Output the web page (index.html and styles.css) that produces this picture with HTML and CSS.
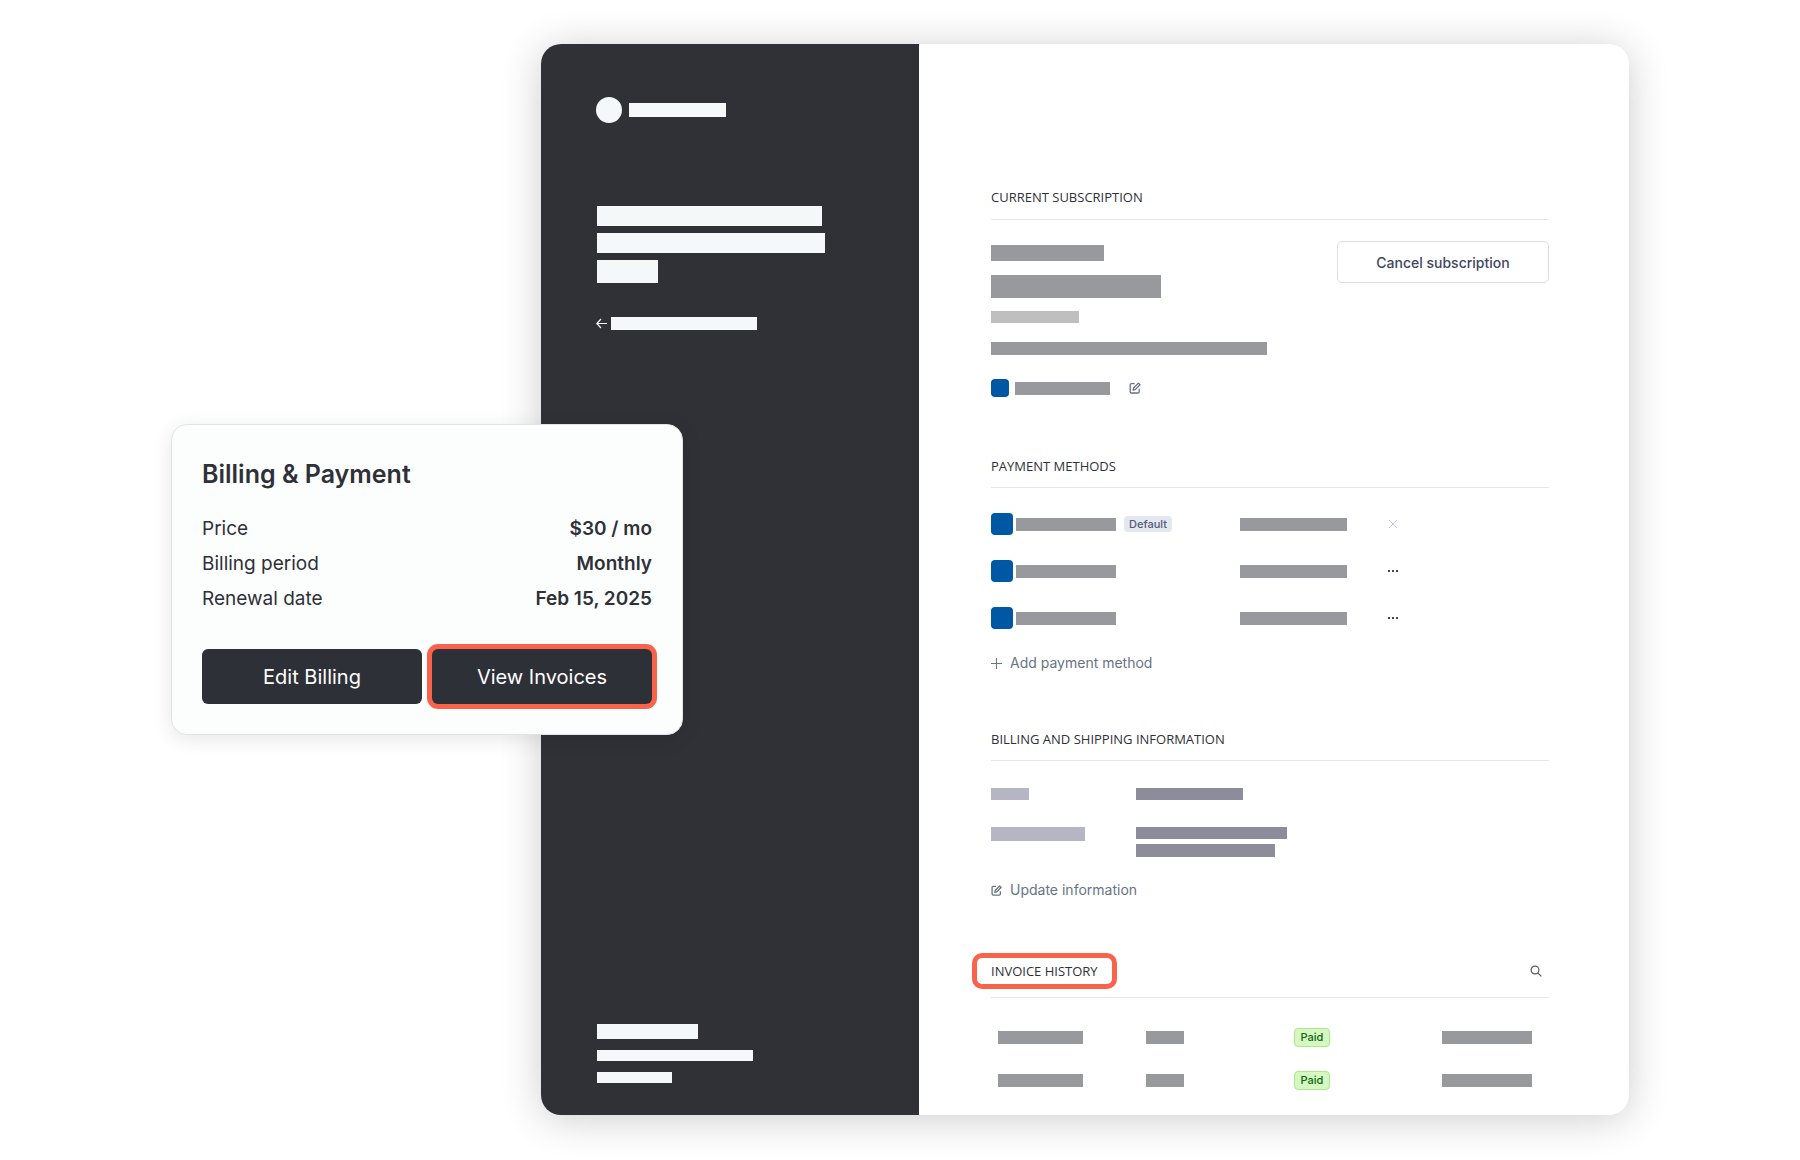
FILE: index.html
```
<!DOCTYPE html>
<html lang="en">
<head>
    <meta charset="UTF-8">
    <meta name="viewport" content="width=device-width, initial-scale=1.0">
    <title>Billing &amp; Payment</title>
    <link rel="stylesheet" href="styles.css">
</head>
<body>
    <div class="stage">
        <div class="window">
            <aside class="sidebar">
                <div class="brand">
                    <span class="logo"></span>
                    <span class="bar brand-name"></span>
                </div>
                <div class="intro">
                    <span class="bar intro-1"></span>
                    <span class="bar intro-2"></span>
                    <span class="bar intro-3"></span>
                </div>
                <a href="#" class="back" aria-label="Back">
                    <svg width="12" height="11" viewBox="0 0 12 11" fill="none" stroke="currentColor" stroke-width="1.2"><path d="M11 5.5H1M5 1L0.8 5.5L5 10"/></svg>
                    <span class="bar back-text"></span>
                </a>
                <div class="sidebar-footer">
                    <span class="bar footer-1"></span>
                    <span class="bar footer-2"></span>
                    <span class="bar footer-3"></span>
                </div>
            </aside>

            <main class="content">
                <section class="subscription">
                    <h2>CURRENT SUBSCRIPTION</h2>
                    <div class="plan">
                        <div class="plan-info">
                            <span class="bar plan-name"></span>
                            <span class="bar plan-price"></span>
                            <span class="bar plan-note"></span>
                            <span class="bar plan-renewal"></span>
                            <div class="plan-card">
                                <span class="tile tile-small"></span>
                                <span class="bar plan-card-number"></span>
                                <button class="icon-btn" aria-label="Edit">
                                    <svg width="12" height="12" viewBox="0 0 12 12" fill="none" stroke="currentColor" stroke-width="1.3" stroke-linejoin="round"><path d="M5.5 1.6H2.4Q1.2 1.6 1.2 2.8V9.8Q1.2 11 2.4 11H9Q10.2 11 10.2 9.8V6.8"/><path d="M9.4 1.1L11 2.7L6.2 7.6L4.2 8L4.6 6Z"/></svg>
                                </button>
                            </div>
                        </div>
                        <button class="cancel-btn">Cancel subscription</button>
                    </div>
                </section>

                <section class="methods">
                    <h2>PAYMENT METHODS</h2>
                    <ul class="method-list">
                        <li>
                            <div class="method">
                                <span class="tile"></span>
                                <span class="bar method-number"></span>
                                <span class="default-badge">Default</span>
                            </div>
                            <span class="bar method-expiry"></span>
                            <button class="icon-btn remove" aria-label="Remove">
                                <svg width="10" height="10" viewBox="0 0 10 10" fill="none" stroke="currentColor"><path d="M1 1L9 9M9 1L1 9"/></svg>
                            </button>
                        </li>
                        <li>
                            <div class="method">
                                <span class="tile"></span>
                                <span class="bar method-number"></span>
                            </div>
                            <span class="bar method-expiry"></span>
                            <button class="icon-btn more" aria-label="More">
                                <svg width="10" height="2" viewBox="0 0 10 2" fill="currentColor"><path d="M0 0h2v2H0zM4 0h2v2H4zM8 0h2v2H8z"/></svg>
                            </button>
                        </li>
                        <li>
                            <div class="method">
                                <span class="tile"></span>
                                <span class="bar method-number"></span>
                            </div>
                            <span class="bar method-expiry"></span>
                            <button class="icon-btn more" aria-label="More">
                                <svg width="10" height="2" viewBox="0 0 10 2" fill="currentColor"><path d="M0 0h2v2H0zM4 0h2v2H4zM8 0h2v2H8z"/></svg>
                            </button>
                        </li>
                    </ul>
                    <a href="#" class="action">
                        <svg width="11" height="11" viewBox="0 0 11 11" fill="none" stroke="currentColor"><path d="M5.5 0V11M0 5.5H11"/></svg>
                        Add payment method
                    </a>
                </section>

                <section class="billing">
                    <h2>BILLING AND SHIPPING INFORMATION</h2>
                    <dl class="billing-info">
                        <dt><span class="bar label-name"></span></dt>
                        <dd><span class="bar value-name"></span></dd>
                        <dt><span class="bar label-address"></span></dt>
                        <dd>
                            <span class="bar value-street"></span>
                            <span class="bar value-city"></span>
                        </dd>
                    </dl>
                    <a href="#" class="action">
                        <svg width="11" height="11" viewBox="0 0 12 12" fill="none" stroke="currentColor" stroke-width="1.4" stroke-linejoin="round"><path d="M5.5 1.6H2.4Q1.2 1.6 1.2 2.8V9.8Q1.2 11 2.4 11H9Q10.2 11 10.2 9.8V6.8"/><path d="M9.4 1.1L11 2.7L6.2 7.6L4.2 8L4.6 6Z"/></svg>
                        Update information
                    </a>
                </section>

                <section class="invoices">
                    <div class="invoices-head">
                        <h2 class="highlight">INVOICE HISTORY</h2>
                        <button class="icon-btn search" aria-label="Search">
                            <svg width="12" height="12" viewBox="0 0 12 12" fill="none" stroke="currentColor" stroke-width="1.2"><circle cx="5" cy="5" r="3.9"/><path d="M7.8 7.8L11.3 11.3"/></svg>
                        </button>
                    </div>
                    <table class="invoice-table">
                        <tr>
                            <td><span class="bar invoice-date"></span></td>
                            <td><span class="bar invoice-amount"></span></td>
                            <td><span class="paid-badge">Paid</span></td>
                            <td><span class="bar invoice-plan"></span></td>
                        </tr>
                        <tr>
                            <td><span class="bar invoice-date"></span></td>
                            <td><span class="bar invoice-amount"></span></td>
                            <td><span class="paid-badge">Paid</span></td>
                            <td><span class="bar invoice-plan"></span></td>
                        </tr>
                    </table>
                </section>
            </main>
        </div>

        <!-- Card on top of the window -->
        <div class="billing-card">
            <h1>Billing &amp; Payment</h1>
            <dl class="summary">
                <div><dt>Price</dt><dd>$30 / mo</dd></div>
                <div><dt>Billing period</dt><dd>Monthly</dd></div>
                <div><dt>Renewal date</dt><dd>Feb 15, 2025</dd></div>
            </dl>
            <div class="card-buttons">
                <button class="card-btn">Edit Billing</button>
                <button class="card-btn active">View Invoices</button>
            </div>
        </div>
    </div>
</body>
</html>
```

FILE: styles.css
```
* {
    box-sizing: border-box;
}

body {
    margin: 0;
    font-family: Inter, "Liberation Sans", sans-serif;
    font-size: 14px;
    line-height: 20px;
    color: #2f3038;
    background-color: #ffffff;
}

h1, h2, ul, dl, dd {
    margin: 0;
    padding: 0;
}

button {
    font-family: inherit;
    cursor: pointer;
}

svg {
    display: block;
}

.stage {
    position: relative;
    margin: 0 auto;
    padding: 44px 0;
    width: 81%;
}

/* Window */
.window {
    display: grid;
    grid-template-columns: 378px 1fr;
    margin-left: 370px;
    border-radius: 20px;
    background-color: #ffffff;
    box-shadow: 0 4px 40px rgba(0, 0, 0, 0.2);
}

.bar {
    display: block;
    height: 13px;
    background-color: #98999d;
}

/* Sidebar */
.sidebar {
    display: flex;
    flex-direction: column;
    padding: 53px 55px 32px;
    border-radius: 20px 0 0 20px;
    background-color: #303136;
    color: #f4f8f9;
}

.sidebar .bar {
    background-color: #f4f8f9;
}

.brand {
    display: flex;
    align-items: center;
    gap: 7px;
}

.logo {
    width: 26px;
    height: 26px;
    border-radius: 50%;
    background-color: #f4f8f9;
}

.sidebar .brand-name {
    width: 97px;
    height: 14px;
}

.intro {
    display: flex;
    flex-direction: column;
    gap: 7px;
    margin: 83px 0 34px;
    padding-left: 1px;
}

.intro .bar {
    height: 20px;
}

.intro-1 { width: 225px; }
.intro-2 { width: 228px; }
.intro-3 { width: 61px; }

.intro .intro-3 {
    height: 23px;
}

.back {
    display: flex;
    align-items: center;
    gap: 3px;
    color: inherit;
}

.back-text {
    width: 146px;
}

.sidebar-footer {
    display: flex;
    flex-direction: column;
    gap: 11px;
    margin-top: auto;
    padding-left: 1px;
}

.sidebar-footer .bar {
    height: 11px;
}

.sidebar-footer .footer-1 {
    height: 15px;
}

.footer-1 { width: 101px; }
.footer-2 { width: 156px; }
.footer-3 { width: 75px; }

/* Content */
.content {
    padding: 143px 80px 13px 72px;
}

h2 {
    padding-bottom: 11px;
    border-bottom: 1px solid #e4e6ec;
    font-family: "Open Sans", "Liberation Sans", sans-serif;
    font-size: 13px;
    font-weight: 400;
    line-height: 20px;
}

.tile {
    width: 22px;
    height: 22px;
    border-radius: 4px;
    background-color: #0057a3;
}

.tile-small {
    width: 18px;
    height: 18px;
}

.icon-btn {
    padding: 0;
    border: none;
    background: none;
    color: #6a6e88;
}

.action {
    display: flex;
    align-items: center;
    gap: 8px;
    color: #687385;
    text-decoration: none;
}

.subscription h2 {
    padding-bottom: 12px;
}

.plan {
    display: flex;
    justify-content: space-between;
    align-items: flex-start;
    margin-top: 21px;
}

.plan-info {
    padding-top: 4px;
}

.plan-name {
    width: 113px;
    height: 16px;
}

.plan-price {
    width: 170px;
    height: 23px;
    margin-top: 14px;
}

.plan-note {
    width: 88px;
    height: 12px;
    margin-top: 13px;
    background-color: #bfbfbf;
}

.plan-renewal {
    width: 276px;
    margin-top: 19px;
}

.plan-card {
    display: flex;
    align-items: center;
    gap: 6px;
    margin-top: 24px;
}

.plan-card-number {
    width: 95px;
    margin-right: 13px;
}

.cancel-btn {
    width: 212px;
    height: 42px;
    border: 1px solid #dcdde2;
    border-radius: 5px;
    background-color: #ffffff;
    color: #414560;
    font-size: 14px;
    font-weight: 500;
}

.methods {
    margin-top: 59px;
}

.method-list {
    display: grid;
    gap: 25px;
    margin: 25px 0 24px;
    list-style: none;
}

.method-list li {
    display: grid;
    grid-template-columns: 249px 148px auto;
    justify-content: start;
    align-items: center;
}

.method {
    display: flex;
    align-items: center;
}

.method-number {
    width: 100px;
    margin: 0 8px 0 3px;
}

.method-expiry {
    width: 107px;
}

.default-badge {
    padding: 0 5px;
    border-radius: 4px;
    background-color: #e3e8f0;
    color: #545978;
    font-size: 11px;
    font-weight: 500;
    line-height: 16px;
}

.remove {
    color: #c0c8d2;
}

.more {
    color: #414560;
}

.billing {
    margin-top: 56px;
}

.billing-info {
    display: grid;
    grid-template-columns: 145px 1fr;
    row-gap: 27px;
    margin: 27px 0 23px;
}

.billing-info .bar {
    height: 12px;
}

.billing-info dt .bar {
    background-color: #b4b7c3;
}

.billing-info dd .bar {
    background-color: #8c8c9a;
}

.label-name { width: 38px; }
.label-address { width: 94px; }
.value-name { width: 107px; }
.value-street { width: 151px; }
.value-city { width: 139px; }

.billing-info .label-address {
    height: 14px;
}

.billing-info .value-city {
    height: 13px;
    margin-top: 5px;
}

.invoices {
    margin-top: 57px;
}

.invoices-head {
    display: flex;
    justify-content: space-between;
    align-items: center;
    padding: 1px 7px 13px 0;
    border-bottom: 1px solid #e4e9f0;
}

.highlight {
    margin-left: -14px;
    padding: 3px 14px;
    border: none;
    border-radius: 5px;
    box-shadow: 0 0 0 5px #f9624b;
}

.search {
    color: #545969;
}

.invoice-table {
    width: 100%;
    margin-top: 18px;
    border-collapse: collapse;
    table-layout: fixed;
}

.invoice-table td {
    width: 148px;
    height: 43px;
    padding: 0 0 0 7px;
    vertical-align: middle;
}

.invoice-table td:last-child {
    width: auto;
}

.invoice-date { width: 85px; }
.invoice-amount { width: 38px; }
.invoice-plan { width: 90px; }

.paid-badge {
    display: block;
    width: 36px;
    border: 1px solid #a6eb84;
    border-radius: 4px;
    background-color: #d7f7c2;
    color: #05690d;
    font-size: 11px;
    font-weight: 500;
    line-height: 17px;
    text-align: center;
}

/* Billing card */
.billing-card {
    position: absolute;
    top: 424px;
    left: 0;
    width: 512px;
    padding: 33px 30px 30px;
    border: 1px solid #e1e3e8;
    border-radius: 16px;
    background-color: #fcfefe;
    box-shadow: 0 4px 20px rgba(0, 0, 0, 0.1);
}

h1 {
    font-size: 25px;
    font-weight: 600;
    line-height: 32px;
}

.summary {
    margin: 21px 0 33px;
    font-size: 19px;
    line-height: 35px;
}

.summary div {
    display: flex;
    justify-content: space-between;
}

.summary dd {
    font-weight: 600;
}

.card-buttons {
    display: grid;
    grid-template-columns: 1fr 1fr;
    gap: 10px;
}

.card-btn {
    height: 55px;
    border: none;
    border-radius: 6px;
    background-color: #2e3038;
    color: #ffffff;
    font-size: 20px;
    font-weight: 400;
}

.card-btn.active {
    box-shadow: 0 0 0 5px #f9624b;
}
```
